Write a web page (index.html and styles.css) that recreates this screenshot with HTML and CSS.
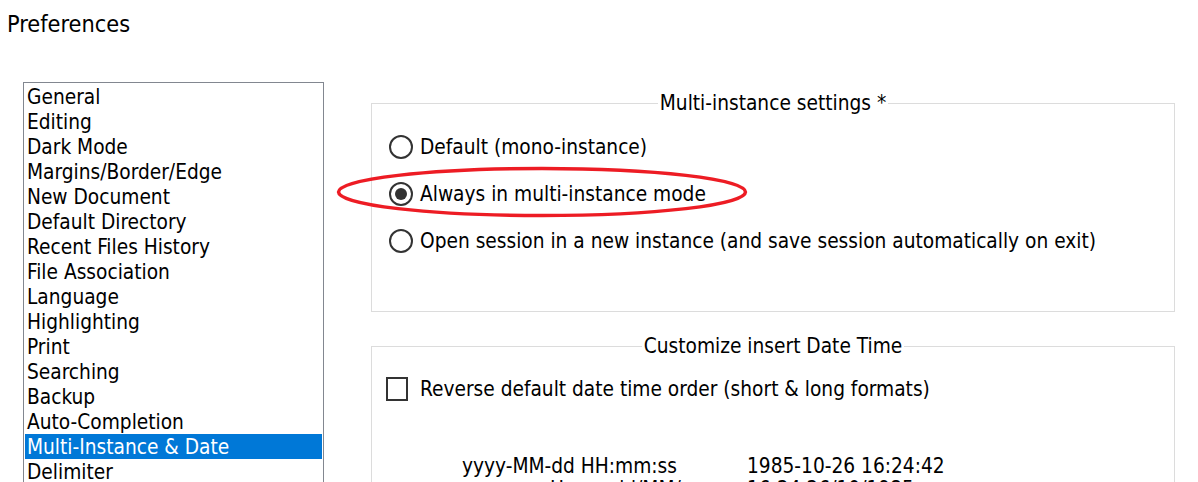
FILE: index.html
```html
<!DOCTYPE html>
<html>
<head>
<meta charset="utf-8">
<title>Preferences</title>
<link rel="stylesheet" href="styles.css">
</head>
<body>
<div class="title">Preferences</div>
<div class="main">
  <ul class="list">
    <li>General</li>
    <li>Editing</li>
    <li>Dark Mode</li>
    <li>Margins/Border/Edge</li>
    <li>New Document</li>
    <li>Default Directory</li>
    <li>Recent Files History</li>
    <li>File Association</li>
    <li>Language</li>
    <li>Highlighting</li>
    <li>Print</li>
    <li>Searching</li>
    <li>Backup</li>
    <li>Auto-Completion</li>
    <li class="selected">Multi-Instance &amp; Date</li>
    <li>Delimiter</li>
  </ul>
  <div class="panel">
    <fieldset class="group group-multi">
      <legend>Multi-instance settings *</legend>
      <div class="opt"><span class="radio"></span><span>Default (mono-instance)</span></div>
      <div class="opt highlighted"><span class="radio checked"></span><span>Always in multi-instance mode</span>
        <svg class="circle-mark" width="412" height="52" viewBox="0 0 412 52"><ellipse cx="206" cy="26" rx="203.5" ry="23.5" fill="none" stroke="#ed1c24" stroke-width="3.5"/></svg>
      </div>
      <div class="opt"><span class="radio"></span><span>Open session in a new instance (and save session automatically on exit)</span></div>
    </fieldset>
    <fieldset class="group group-date">
      <legend>Customize insert Date Time</legend>
      <div class="opt"><span class="check"></span><span>Reverse default date time order (short &amp; long formats)</span></div>
      <div class="formats">
        <div class="fmt">yyyy-MM-dd HH:mm:ss</div><div class="val">1985-10-26 16:24:42</div>
        <div class="fmt second">H:mm dd/MM/yyyy</div><div class="val">16:24 26/10/1985</div>
      </div>
    </fieldset>
  </div>
</div>
</body>
</html>
```

FILE: styles.css
```css
html, body {
  margin: 0;
  padding: 0;
  background: #ffffff;
  height: 482px;
  overflow: hidden;
}
body {
  font-family: "DejaVu Sans Condensed", "DejaVu Sans", sans-serif;
  font-stretch: condensed;
  font-size: 20.7px;
  color: #000000;
}
.title {
  margin-top: 10px;
  padding-left: 7px;
  font-size: 23.3px;
  line-height: 28px;
}
.main {
  display: flex;
  align-items: flex-start;
  margin-top: 44px;
}
.list {
  list-style: none;
  margin: 0 0 0 23px;
  padding: 1px;
  width: 301px;
  box-sizing: border-box;
  border: 1px solid #828790;
  height: 420px;
}
.list li {
  height: 25px;
  line-height: 26px;
  padding-left: 2px;
  white-space: nowrap;
}
.list li.selected {
  background: #0078d7;
  color: #ffffff;
}
.panel {
  margin-left: 47px;
  width: 804px;
  display: flex;
  flex-direction: column;
}
.group {
  margin: 0;
  border: 1px solid #dcdcdc;
  padding: 7px 0 0 0;
  min-width: 0;
}
.group legend {
  margin: 0 auto;
  padding: 0 2px;
  line-height: 25px;
}
.group-multi {
  margin-top: 9px;
  padding-bottom: 47px;
}
.group-date {
  margin-top: 22px;
  padding-bottom: 0;
  height: 200px;
}
.opt {
  position: relative;
  display: flex;
  align-items: center;
  height: 47px;
  padding-left: 17px;
  white-space: nowrap;
}
.group-date .opt {
  height: 46px;
}
.radio {
  width: 24px;
  height: 24px;
  box-sizing: border-box;
  border: 2px solid #333333;
  border-radius: 50%;
  margin-right: 7px;
  display: flex;
  align-items: center;
  justify-content: center;
  flex: none;
}
.radio.checked::after {
  content: "";
  width: 12px;
  height: 12px;
  border-radius: 50%;
  background: #333333;
}
.check {
  width: 22px;
  height: 24px;
  box-sizing: border-box;
  border: 2px solid #333333;
  margin-left: -3px;
  margin-right: 12px;
  flex: none;
}
.circle-mark {
  position: absolute;
  left: -36px;
  top: -4px;
}
.formats {
  display: grid;
  grid-template-columns: 285px auto;
  margin-top: 43px;
  margin-left: 90px;
  grid-auto-rows: 23px;
  line-height: 23px;
}
.fmt.second {
  padding-left: 88px;
}
```
